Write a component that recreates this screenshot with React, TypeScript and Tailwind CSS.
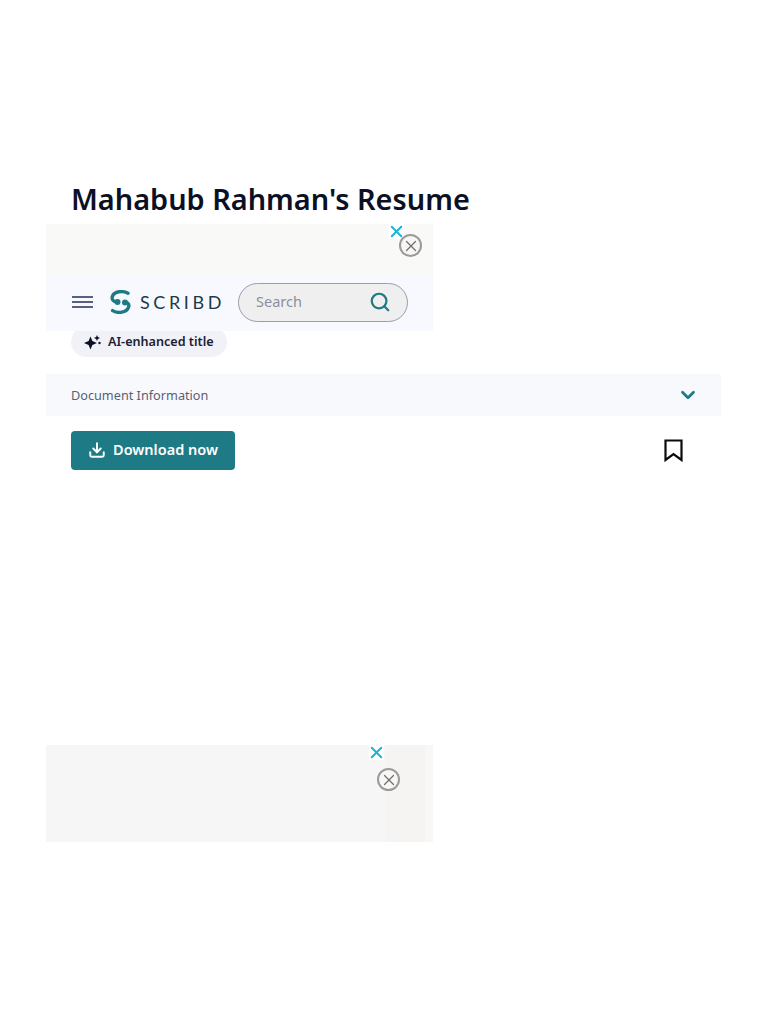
import { ChevronDown, Download, Search, X } from "lucide-react";

const font = { fontFamily: '"Noto Sans", sans-serif' };

const AdClose = () => (
  <div className="flex h-[23px] w-[23px] items-center justify-center rounded-full border-2 border-[#9a9a9a] bg-[#f7f6f5]">
    <X className="h-[18px] w-[18px] shrink-0 text-[#6f6f6f]" strokeWidth={1.6} />
  </div>
);

const AdChoice = () => (
  <div className="flex h-[15px] w-[15px] items-center justify-center bg-white">
    <X className="h-[19px] w-[19px] shrink-0 text-[#1cb4d2]" strokeWidth={2.4} />
  </div>
);

const ScribdLogo = () => (
  <div className="flex w-[111px] items-center gap-[9px]">
    <svg className="shrink-0" width="21" height="24" viewBox="0 0 21 24" fill="none">
      <path d="M18 3.2C13 .6 4.2 1 2.4 6.4 1.4 9.6 3.6 11.8 7 12" stroke="#1e7b85" strokeWidth="3.4" strokeLinecap="round" />
      <path d="M2.6 20.6C7.6 23.6 16.8 23 18.6 17 19.4 14.4 18 12.6 15.4 12.2" stroke="#1e7b85" strokeWidth="3.4" strokeLinecap="round" />
      <circle cx="7.5" cy="12" r="3" fill="#1e7b85" />
      <circle cx="15" cy="12.4" r="3" fill="#1e7b85" />
    </svg>
    <span className="text-[18px] leading-none tracking-[0.2em] text-[#1a3a4c]" style={{ fontFamily: '"Lato", sans-serif' }}>
      SCRIBD
    </span>
  </div>
);

export default function App() {
  return (
    <div className="min-h-[1024px] bg-white px-[46px] pt-[179px]" style={font}>
      <h1 className="px-[25px] text-[28.9px] font-semibold leading-[40px] text-[#0b1025]">Mahabub Rahman's Resume</h1>

      <div className="relative z-10 mt-[5px] w-[387px]">
        <div className="relative h-[52px] bg-[#f9f9f8]">
          <div className="absolute right-[29px] top-0">
            <AdChoice />
          </div>
          <div className="absolute right-[11px] top-[10px]">
            <AdClose />
          </div>
        </div>
        <div className="flex h-[55px] items-center bg-[#f8f9fe] pb-[3px] pl-[26px]">
          <div className="flex w-[21px] flex-col gap-[3px]">
            <span className="h-[2px] bg-[#5a6080]" />
            <span className="h-[2px] bg-[#5a6080]" />
            <span className="h-[2px] bg-[#5a6080]" />
          </div>
          <div className="ml-[17px]">
            <ScribdLogo />
          </div>
          <div className="ml-[17px] flex h-[39px] w-[170px] items-center justify-between rounded-full border border-[#9a9db0] bg-[#efefef] pl-[17px] pr-[16px]">
            <span className="text-[14.5px] text-[#8a8fa0]">Search</span>
            <Search className="h-[22px] w-[22px] text-[#1e7b85]" strokeWidth={2.4} />
          </div>
        </div>
      </div>

      <div className="-mt-[4px] ml-[25px] flex h-[30px] w-[156px] items-center gap-[7px] rounded-full bg-[#f0f2f8] pl-[13px]">
        <svg width="17" height="17" viewBox="0 0 17 17" fill="#0b1025">
          <path d="M6.5 2.5l1.9 4.6L13 9l-4.6 1.9L6.5 15.5l-1.9-4.6L0 9l4.6-1.9z" />
          <path d="M13 1l.9 2.1L16 4l-2.1.9L13 7l-.9-2.1L10 4l2.1-.9z" />
          <circle cx="15.5" cy="9" r="1.2" />
        </svg>
        <span className="text-[12.6px] font-semibold text-[#1c2033]">AI-enhanced title</span>
      </div>

      <div className="mt-[17px] flex h-[42px] w-[675px] items-center justify-between bg-[#f8f9fd] pl-[25px] pr-[22px]">
        <span className="pt-[1px] text-[12.7px] text-[#5a5f78]">Document Information</span>
        <ChevronDown className="h-[22px] w-[22px] text-[#1e7b85]" strokeWidth={3} />
      </div>

      <div className="mt-[15px] flex w-[675px] items-center justify-between pl-[25px] pr-[38px]">
        <button className="flex h-[39px] w-[164px] items-center justify-center gap-[7px] rounded-[4px] bg-[#1e7b85] pb-[1px] text-[14.5px] font-semibold text-white">
          <Download className="h-[18px] w-[18px]" strokeWidth={2.6} />
          Download now
        </button>
        <svg width="19" height="23" viewBox="0 0 19 23" fill="none">
          <path d="M1.5 1.5h16v19.5l-8-6-8 6z" stroke="#0b0b0b" strokeWidth="2.2" strokeLinejoin="miter" />
        </svg>
      </div>

      <div className="relative mt-[275px] flex h-[97px] w-[387px]">
        <div className="flex-1 bg-[#f6f6f6]" />
        <div className="w-[38px] bg-[#f5f4f2]" />
        <div className="w-[8px] bg-[#f8f7f6]" />
        <div className="absolute right-[49px] top-0">
          <AdChoice />
        </div>
        <div className="absolute right-[33px] top-[23px]">
          <AdClose />
        </div>
      </div>
    </div>
  );
}
